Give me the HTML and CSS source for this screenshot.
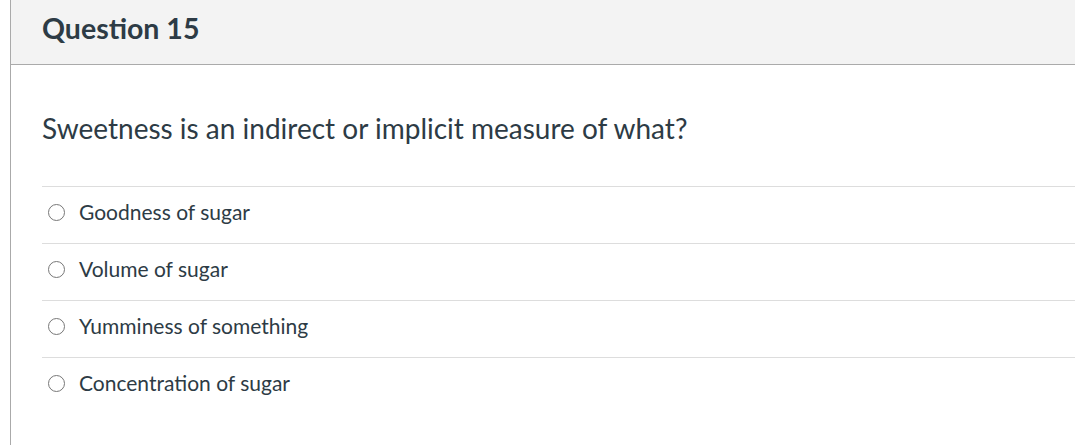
FILE: index.html
```html
<!DOCTYPE html>
<html>
<head>
<meta charset="utf-8">
<link rel="stylesheet" href="styles.css">
</head>
<body>
<div class="question">
  <div class="header">
    <h2 class="title">Question 15</h2>
  </div>
  <div class="body">
    <p class="prompt">Sweetness is an indirect or implicit measure of what?</p>
    <div class="answers">
      <label class="answer"><span class="radio"></span><span class="label">Goodness of sugar</span></label>
      <label class="answer"><span class="radio"></span><span class="label">Volume of sugar</span></label>
      <label class="answer"><span class="radio"></span><span class="label">Yumminess of something</span></label>
      <label class="answer"><span class="radio"></span><span class="label">Concentration of sugar</span></label>
    </div>
  </div>
</div>
</body>
</html>
```

FILE: styles.css
```css
html, body {
  margin: 0;
  padding: 0;
  background: #fff;
}
body {
  font-family: Lato, "Open Sans", sans-serif;
  color: #2d3b45;
}
.question {
  margin-left: 10px;
  border-left: 1px solid #aaaaaa;
  height: 445px;
  box-sizing: border-box;
}
.header {
  height: 64px;
  background: #f3f3f3;
  border-bottom: 1px solid #aaaaaa;
  display: flex;
  align-items: center;
  padding-left: 31px;
}
.title {
  margin: 0;
  font-size: 28.5px;
  font-weight: 700;
  line-height: 1;
  position: relative;
  top: -4px;
}
.body {
  padding-left: 31px;
}
.prompt {
  margin: 0;
  padding-top: 47px;
  height: 74px;
  font-size: 28px;
  line-height: 32px;
}
.answers {
  display: flex;
  flex-direction: column;
}
.answer {
  display: flex;
  align-items: center;
  height: 57px;
  border-top: 1px solid #dddddd;
  padding-left: 6px;
  padding-bottom: 6px;
  box-sizing: border-box;
}
.radio {
  width: 15px;
  height: 15px;
  border: 1.5px solid #777;
  border-radius: 50%;
  flex: none;
  margin-right: 14px;
}
.label {
  font-size: 21px;
  line-height: 24px;
}
```
